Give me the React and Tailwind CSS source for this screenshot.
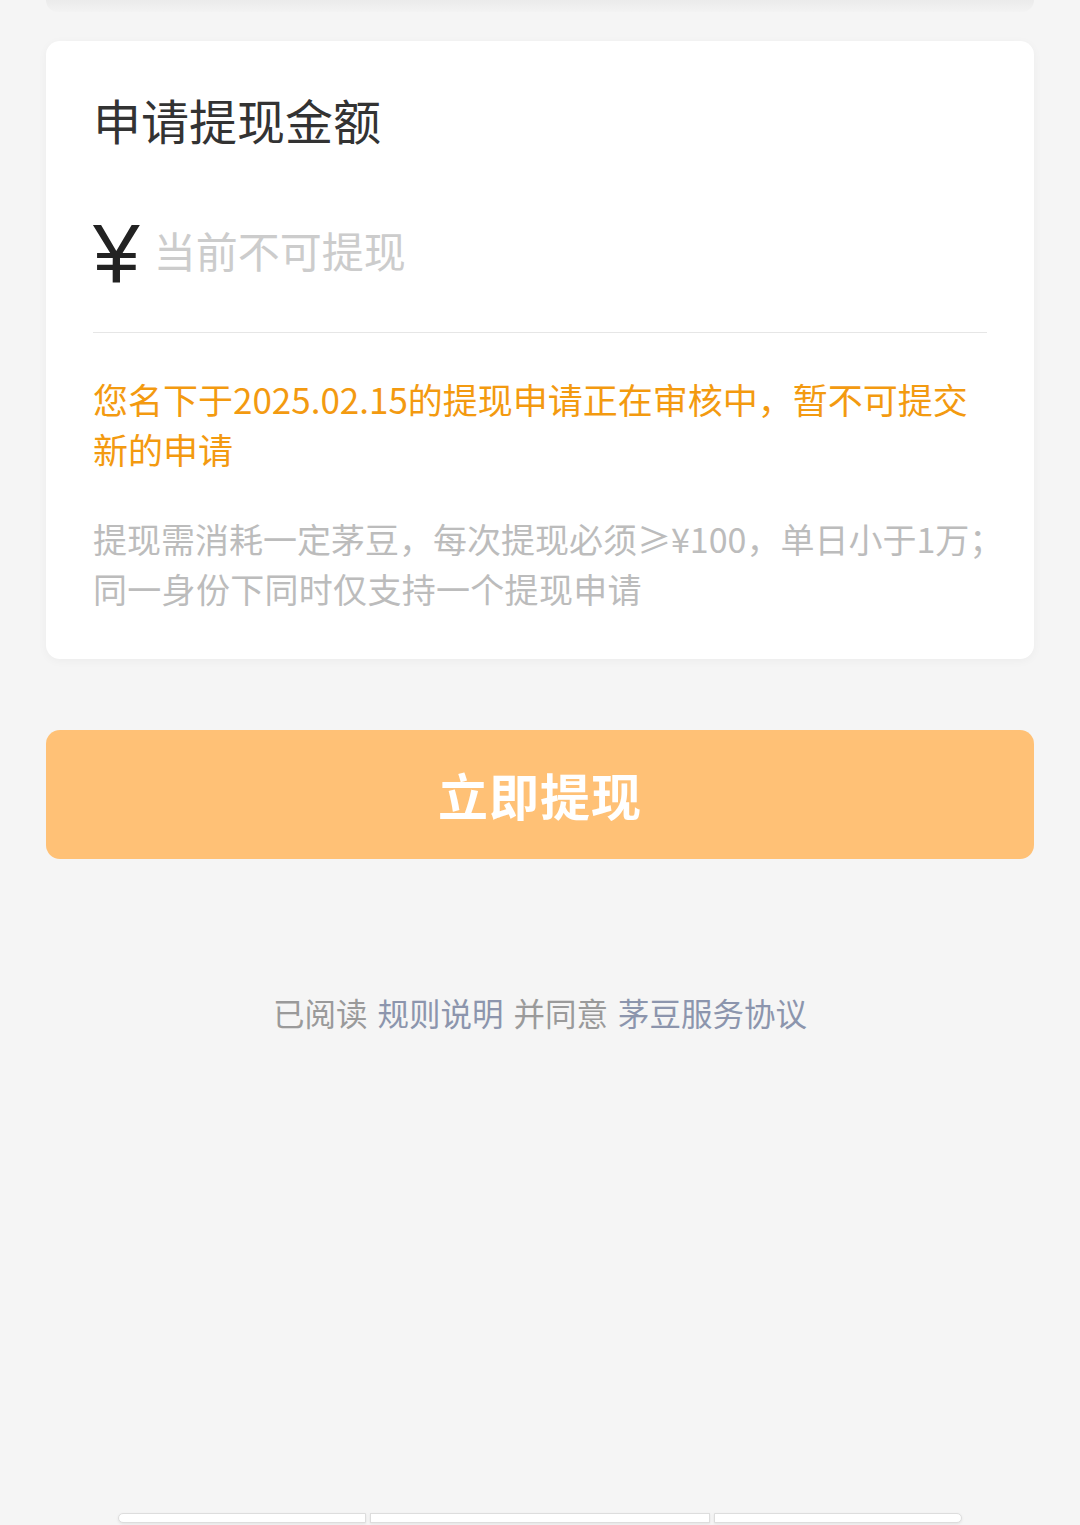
export default function App() {
  return (
    <div
      className="relative w-[1080px] h-[1525px] overflow-hidden bg-[#f5f5f5]"
      style={{ fontFamily: '"Noto Sans CJK SC", "Noto Sans", sans-serif' }}
    >
      {/* shadow of the card above, cut off by the viewport */}
      <div className="mx-[46px] h-[12px] rounded-b-[14px] bg-gradient-to-b from-[#ebebeb] to-[#f3f3f3]" />

      {/* amount card */}
      <div className="mx-[46px] mt-[29px] rounded-[14px] bg-white px-[47px] pt-[48px] pb-[45px] shadow-[0_2px_10px_rgba(0,0,0,0.04)]">
        <h2 className="text-[48px] leading-[60px] text-[#333333] font-normal">申请提现金额</h2>

        <div className="mt-[64px] flex items-center h-[120px] pb-[40px] border-b border-[#e6e6e6]">
          <span className="text-[84px] leading-[80px] text-[#222222] font-medium" style={{ fontFamily: '"Liberation Sans", sans-serif' }}>
            ¥
          </span>
          <span className="ml-[14px] text-[42px] leading-[80px] text-[#cccccc] -mt-[6px]">当前不可提现</span>
        </div>

        <div className="mt-[41px] text-[35px] leading-[50px] text-[#f39a10]">
          <p className="whitespace-nowrap">您名下于2025.02.15的提现申请正在审核中，暂不可提交</p>
          <p className="whitespace-nowrap">新的申请</p>
        </div>

        <div className="mt-[40px] text-[34px] leading-[50px] text-[#bcbcbc]">
          <p className="whitespace-nowrap">提现需消耗一定茅豆，每次提现必须≥¥100，单日小于1万；</p>
          <p className="whitespace-nowrap tracking-[0.3px]">同一身份下同时仅支持一个提现申请</p>
        </div>
      </div>

      {/* submit */}
      <div className="mx-[46px] mt-[71px]">
        <button className="w-full h-[129px] rounded-[14px] bg-[#ffc176] text-white text-[50px] font-bold tracking-[1px]">
          立即提现
        </button>
      </div>

      {/* agreement */}
      <div className="mt-[133px] flex justify-center gap-[10px] text-[31.5px] leading-[40px]">
        <span className="text-[#9a9a9a]">已阅读</span>
        <span className="text-[#8c95ad]">规则说明</span>
        <span className="text-[#9a9a9a]">并同意</span>
        <span className="text-[#8c95ad]">茅豆服务协议</span>
      </div>

      {/* bottom tab strip, cut off */}
      <div className="absolute left-[118px] top-[1513px] flex gap-[4px]">
        <div className="w-[248px] h-[10px] rounded-l-full bg-white border border-[#dddddd] shadow-[0_1px_3px_rgba(0,0,0,0.08)]" />
        <div className="w-[340px] h-[10px] bg-white border border-[#dddddd] shadow-[0_1px_3px_rgba(0,0,0,0.08)]" />
        <div className="w-[248px] h-[10px] rounded-r-full bg-white border border-[#dddddd] shadow-[0_1px_3px_rgba(0,0,0,0.08)]" />
      </div>
    </div>
  );
}
